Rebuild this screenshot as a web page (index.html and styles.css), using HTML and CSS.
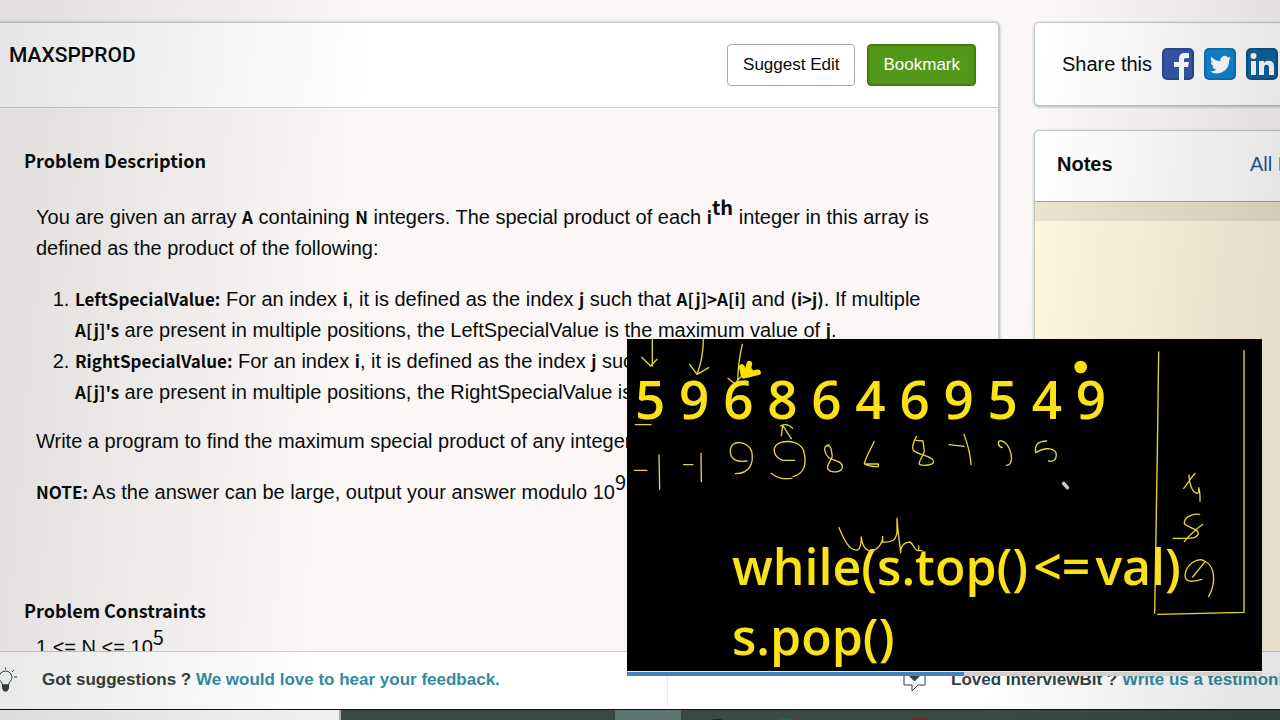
FILE: index.html
```html
<!DOCTYPE html>
<html lang="en">
<head>
    <meta charset="UTF-8">
    <meta name="viewport" content="width=device-width, initial-scale=1.0">
    <title>MAXSPPROD</title>
    <link rel="stylesheet" href="styles.css">
</head>
<body>
    <main class="page">
        <section class="problem">
            <header class="problem-header">
                <h1>MAXSPPROD</h1>
                <div class="actions">
                    <button class="btn" type="button">Suggest Edit</button>
                    <button class="btn btn-green" type="button">Bookmark</button>
                </div>
            </header>
            <div class="problem-body">
                <h2>Problem Description</h2>
                <div class="text">
                    <p>You are given an array <b>A</b> containing <b>N</b> integers. The special product of each <b>i<sup>th</sup></b> integer in this array is defined as the product of the following:</p>
                    <ol>
                        <li><b>LeftSpecialValue:</b> For an index <b>i</b>, it is defined as the index <b>j</b> such that <b>A[j]&gt;A[i]</b> and <b>(i&gt;j)</b>. If multiple <b>A[j]'s</b> are present in multiple positions, the LeftSpecialValue is the maximum value of <b>j</b>.</li>
                        <li><b>RightSpecialValue:</b> For an index <b>i</b>, it is defined as the index <b>j</b> such that <b>A[j]&gt;A[i]</b> and <b>(j&gt;i)</b>. If multiple <b>A[j]'s</b> are present in multiple positions, the RightSpecialValue is the minimum value of <b>j</b>.</li>
                    </ol>
                    <p>Write a program to find the maximum special product of any integer in the array.</p>
                    <p><b>NOTE:</b> As the answer can be large, output your answer modulo 10<sup>9</sup> + 7.</p>
                </div>
                <h2 class="constraints">Problem Constraints</h2>
                <div class="text limits">
                    <p>1 &lt;= N &lt;= 10<sup>5</sup></p>
                </div>
            </div>
        </section>

        <aside class="side">
            <section class="card share">
                <span>Share this</span>
                <a href="#" aria-label="Facebook">
                    <svg class="social" viewBox="0 0 32 32">
                        <rect width="32" height="32" rx="5" fill="#2b4795"/>
                        <rect x="2" y="2" width="28" height="28" rx="4" fill="#3657a6"/>
                        <path d="M17 32V19h-5v-5h5v-3c0-4 2-6 6-6h4v5h-3c-2 0-2 1-2 2v2h5l-1 5h-4v13z" fill="#fff"/>
                    </svg>
                </a>
                <a href="#" aria-label="Twitter">
                    <svg class="social" viewBox="0 0 32 32">
                        <rect width="32" height="32" rx="5" fill="#0874b9"/>
                        <rect x="2" y="2" width="28" height="28" rx="4" fill="#1184cd"/>
                        <path d="M27 10q-1 .5-2.400.700 1.300-.8 1.800-2.300-1.200.7-2.600 1a4.300 4.300 0 0 0-7.400 3.900q-5.400-.3-8.900-4.500a4.300 4.300 0 0 0 1.300 5.700q-1 0-1.900-.5c0 2 1.400 3.900 3.400 4.300q-.9.200-1.900.1a4.300 4.300 0 0 0 4 3A8.600 8.600 0 0 1 6 23.400a12.300 12.300 0 0 0 19-11q1.200-.9 2-2.400z" fill="#fff"/>
                    </svg>
                </a>
                <a href="#" aria-label="LinkedIn">
                    <svg class="social" viewBox="0 0 32 32">
                        <rect width="32" height="32" rx="5" fill="#09548b"/>
                        <rect x="2" y="2" width="28" height="28" rx="4" fill="#0d639e"/>
                        <circle cx="7.500" cy="8" r="3" fill="#fff"/>
                        <path d="M5 13h5v14H5zM13 13h5v2c1-1.500 2.500-2.300 4.500-2.300 4 0 5.500 2.300 5.500 6.300v8h-5v-7c0-2-.5-3.200-2.200-3.200-2 0-2.800 1.200-2.800 3.200v7h-5z" fill="#fff"/>
                    </svg>
                </a>
            </section>
            <section class="card notes">
                <header class="notes-header">
                    <h3>Notes</h3>
                    <a href="#">All Notes</a>
                </header>
                <div class="notes-pad"></div>
            </section>
        </aside>
    </main>

    <footer class="feedback">
        <div class="feedback-item">
            <svg class="feedback-icon" viewBox="0 0 24 24" fill="none" stroke="#33413f">
                <path d="M8.500 17c0-3-3.500-4-3.500-7.500a6.500 6.500 0 0 1 13 0c0 3.500-3.500 4.500-3.500 7.500z"/>
                <path d="M8.500 17h6v3.500L13 23h-3l-1.500-2.500z" fill="#33413f"/>
                <path d="M11.500 1.500V-.5M18 4l2-2M20 9h3"/>
            </svg>
            <p>Got suggestions ? <a href="#">We would love to hear your feedback.</a></p>
        </div>
        <div class="feedback-item">
            <svg class="feedback-icon" viewBox="0 0 24 24" fill="none" stroke="#33413f">
                <path d="M1 2h21v15h-7l-6 6v-6H1z"/>
                <path d="M7 8.500c0-3 4-3 4.500-.5.500-2.500 4.500-2.500 4.500.5L11.500 13z" fill="#33413f"/>
            </svg>
            <p>Loved InterviewBit ? <a href="#">Write us a testimonial.</a></p>
        </div>
    </footer>

    <div class="taskbar">
        <div class="taskbar-gap"></div>
        <div class="taskbar-apps"></div>
        <div class="taskbar-active"></div>
        <div class="taskbar-rest">
            <svg viewBox="0 0 600 11" preserveAspectRatio="xMinYMin slice">
                <ellipse cx="36" cy="13" rx="9" ry="4" fill="#171d1c"/>
                <ellipse cx="104" cy="12" rx="10" ry="4" fill="#1e6257"/>
                <ellipse cx="239" cy="13" rx="16" ry="5" fill="#61302a"/>
            </svg>
        </div>
    </div>

    <!-- Floating whiteboard -->
    <div class="board">
        <div class="board-screen">
            <p class="numbers">5 9 6 8 6 4 6 9 5 4 9</p>
            <p class="code">while(s.top()<span class="op">&lt;=</span>val)<br>s.pop()</p>
            <svg class="ink" viewBox="0 12 1905 996">
                <!-- arrows above the array -->
                <path d="M76 12V93M44 67l27 26 19-20M229 12c0 40-8 78-19 106M188 88l22 30 35-20M346 28c-8 32-13 70-14 110M303 130l20 16 18-20"/>
                <path class="thick" d="M367 86l-7 34-16-24M360 120l33-8"/>
                <path class="thick" d="M345 98l5 24 20-14"/>
                <circle class="dot" cx="1361" cy="96" r="19"/>
                <!-- answers below the array -->
                <path d="M25 269h47M22 406h38M96 360l2 103M170 389h28M222 355l1 85"/>
                <path d="M360 378c-30 4-50-4-50-29 0-40 55-30 64 0 7 35-5 67-49 67"/>
                <path d="M463 302l4-31 26 40M460 273c13-7 25-6 37 7"/>
                <path d="M503 376h-36c-29-10-35-42-7-53 30-9 62 1 70 25 10 38 3 67-32 77M432 415c20 15 35 18 63 15"/>
                <path d="M606 330c-22 2-12 26-1 38 13 10 40 8 41 27 0 19-36 20-44 6-5-14 19-30 13-43-2-12-1-28-17-26"/>
                <path d="M741 320c-10 24-24 44-29 66 14 10 34 9 42 9v-8h-42"/>
                <path d="M868 305c-8 15-15 30-9 41 15 15 60 17 61 34 0 9-30 15-43 8-2-13 14-27 15-40l-4-30-21-2"/>
                <path d="M966 329l45 5M1011 298c10 28 20 55 21 91"/>
                <path d="M1126 338c-15-5-14-19-6-21 32 3 47 74 18 74"/>
                <path d="M1259 318c-25 1-37 10-33 35 30-19 63-14 62 9-1 14-12 19-23 16"/>
                <!-- scribble over the loop -->
                <path d="M636 578c15 35 30 70 56 67 10-5 11-22 11-39 3 31 15 41 30 42 15-2 35-20 34-44v17c25 2 40-4 43-30V550c2 38 8 73 11 103 0-20 10-31 27-32 12 4 14 28 27 26v-14 14h10"/>
                <!-- stack -->
                <path d="M1595 51c-2 260-9 530-12 784M1592 838l259-6V46"/>
                <path d="M1705 415c-12 10-23 32-35 45M1686 420c0 23 9 53 24 55 8-2 5-12 5-17 5 14 4 25 4 41"/>
                <path d="M1718 538c-20-3-48 8-46 27 10 15 47 15 41 34-6 11-18 11-34 11h-41M1727 568c-17 13-39 31-55 52"/>
                <path d="M1724 733c-25 7-50 12-50-13 4-35 40-53 58-42 34 15 35 68 13 106M1735 679l-38 47"/>
                <!-- pen cursor -->
                <path class="pen" d="M1310 445l11 13"/>
            </svg>
        </div>
        <progress class="seek" value="53" max="100" aria-label="Playback position"></progress>
    </div>
</body>
</html>
```
FILE: styles.css
```css
* {
    box-sizing: border-box;
}

body {
    margin: 0;
    height: 100vh;
    display: flex;
    flex-direction: column;
    overflow: hidden;
    position: relative;
    background: #faf7f6;
    color: #080c0c;
    font-family: "Liberation Sans", Arial, sans-serif;
    font-size: 20px;
}

/* Soft shade on both sides of the window */
body::before {
    content: "";
    position: absolute;
    inset: 0;
    z-index: 1;
    pointer-events: none;
    background: linear-gradient(95deg, rgba(0, 0, 0, 0.1), transparent 28%, transparent 78%, rgba(0, 0, 0, 0.1) 97%);
}

h1, h2, h3, p {
    margin: 0;
}

h1 {
    font-family: Roboto, sans-serif;
    font-size: 21px;
    font-weight: 500;
    line-height: 22px;
}

h3 {
    font-size: 20px;
}

a {
    text-decoration: none;
}

.page {
    flex: 1;
    min-height: 0;
    display: flex;
    align-items: flex-start;
    gap: 35px;
    padding-top: 22px;
    overflow: hidden;
}

.problem {
    flex: 1;
    min-width: 0;
    border: 1px solid #c8cccc;
    border-left: 0;
    border-radius: 0 5px 0 0;
    box-shadow: 1px 0 3px #a9b5b5;
}

.problem-header {
    display: flex;
    justify-content: space-between;
    align-items: flex-start;
    padding: 21px 22px 21px 9px;
    background: #fff;
    border-bottom: 1px solid #cdd0d0;
    border-radius: 0 5px 0 0;
}

.actions {
    display: flex;
    gap: 12px;
}

.btn {
    height: 42px;
    padding: 0 15px;
    border: 1px solid #a5aaaa;
    border-radius: 4px;
    background: #fff;
    color: #080c0c;
    font-family: inherit;
    font-size: 17px;
}

.btn-green {
    border-color: #397b0b;
    background: #53981a;
    box-shadow: inset 0 0 3px #2f6c05;
    color: #fff;
}

.problem-body {
    padding: 38px 24px 0;
}

h2 {
    font-family: "Noto Sans CJK JP", sans-serif;
    font-size: 18px;
    line-height: 28px;
}

.text {
    padding: 28px 12px 0;
    line-height: 31px;
}

.text b {
    font-family: "Noto Sans CJK JP", sans-serif;
    font-size: 17px;
    line-height: 1;
}

.text sup {
    font-family: "Noto Sans CJK JP", sans-serif;
    font-size: 20px;
    line-height: 0;
    vertical-align: 9px;
}

.text ol {
    margin: 20px 0 18px;
    padding-left: 39px;
}

.text p + p {
    margin-top: 20px;
}

.constraints {
    margin-top: 88px;
}

.limits {
    padding-top: 8px;
}

.side {
    width: 246px;
    display: flex;
    flex-direction: column;
    gap: 24px;
}

.card {
    width: 321px;
    border: 1px solid #bcc7c7;
    border-radius: 5px;
    background: #fff;
    box-shadow: 0 1px 3px #a9b5b5;
}

.share {
    display: flex;
    align-items: center;
    gap: 10px;
    height: 84px;
    padding-left: 27px;
}

.social {
    display: block;
    width: 32px;
    height: 32px;
}

.notes-header {
    display: flex;
    justify-content: space-between;
    align-items: center;
    height: 71px;
    padding: 0 24px 4px 22px;
    border-bottom: 1px solid #9aa9a5;
}

.notes-header a {
    color: #27549b;
}

.notes-pad {
    height: 450px;
    border-top: 19px solid #eae3cf;
    background: #fff6e0;
}

/* Feedback strip */
.feedback {
    display: grid;
    grid-template-columns: 667px 1fr;
    height: 58px;
    padding-bottom: 2px;
    border-top: 1px solid #c9cccc;
    background: #fff;
    color: #33413f;
    font-size: 17px;
    font-weight: bold;
    white-space: nowrap;
    overflow: hidden;
}

.feedback-item {
    display: flex;
    align-items: center;
    gap: 24px;
    margin-left: -6px;
}

.feedback-item + .feedback-item {
    margin: 0;
    padding-left: 235px;
    border-left: 1px solid #e8eaea;
}

.feedback-icon {
    width: 24px;
    height: 24px;
    overflow: visible;
}

.feedback a {
    color: #318ba3;
}

.taskbar {
    display: flex;
    height: 11px;
    background: #3b4843;
    border-top: 1px solid #111;
}

.taskbar-gap {
    width: 341px;
    background: #f2f0ef;
    border-right: 2px solid #a5b0b0;
}

.taskbar-apps {
    width: 274px;
}

.taskbar-active {
    width: 66px;
    background: #5d7370;
}

.taskbar-rest {
    flex: 1;
    overflow: hidden;
}

.taskbar-rest svg {
    display: block;
    width: 600px;
    height: 11px;
}

/* Whiteboard window over the page */
.board {
    position: absolute;
    z-index: 2;
    right: 18px;
    bottom: 44px;
    width: 635px;
}

.board-screen {
    position: relative;
    height: 332px;
    padding: 25px 0 0 8px;
    background: #000;
    color: #fae216;
    font-family: "Open Sans", "Noto Sans", sans-serif;
    font-weight: 600;
    white-space: nowrap;
}

.numbers {
    font-size: 53px;
    line-height: 70px;
}

.code {
    padding: 97px 0 0 97px;
    font-size: 50px;
    line-height: 70px;
}

.op {
    margin: 0 5px;
}

.ink {
    position: absolute;
    inset: 0;
    width: 100%;
    height: 100%;
    fill: none;
    stroke: #e8d635;
    stroke-width: 4;
    stroke-linecap: round;
    stroke-linejoin: round;
}

.ink .thick {
    stroke: #fae200;
    stroke-width: 17;
}

.ink .dot {
    fill: #fae200;
    stroke: none;
}

.ink .pen {
    stroke: #c9c9c9;
    stroke-width: 11;
}

.seek {
    display: block;
    width: 100%;
    height: 5px;
    border: 0;
    appearance: none;
    border-top: 1px solid #eee;
}

.seek::-webkit-progress-bar {
    background: #d3cfcd;
}

.seek::-webkit-progress-value {
    background: #4380bd;
}
```
